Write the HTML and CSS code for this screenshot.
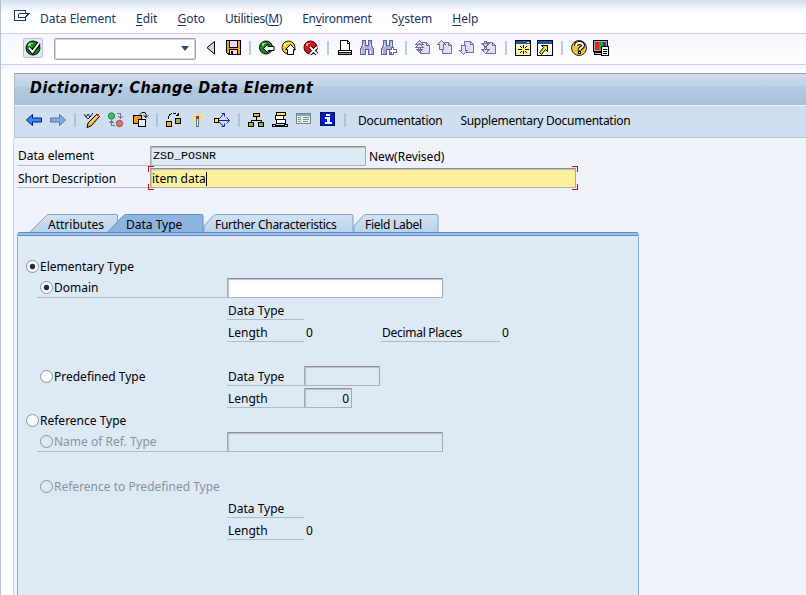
FILE: index.html
```html
<!DOCTYPE html>
<html lang="en">
<head>
<meta charset="UTF-8">
<title>Dictionary: Change Data Element</title>
<link rel="stylesheet" href="styles.css">
</head>
<body>
<div class="window">

<nav class="menubar">
<svg class="icon menu-icon" viewBox="0 0 16 16"><path d="M11.500 3V.5H.5v10h11V8M4.500 3.500h6M4.500 3.500v4h5M10 3.500h5L11 7.500H9"/></svg>
<span>Data Element</span>
<span><u>E</u>dit</span>
<span><u>G</u>oto</span>
<span class="tight">Utilities(<u>M</u>)</span>
<span class="tight">En<u>v</u>ironment</span>
<span>S<u>y</u>stem</span>
<span><u>H</u>elp</span>
</nav>

<div class="toolbar">
<button class="enter"><svg class="icon" viewBox="0 0 16 16"><circle class="green smooth" cx="8" cy="8" r="7"/><path fill="#7fe070" d="M4 3h4v1H6v2H3V4h1z"/><path class="smooth" d="M4 8l3.500 4L14 3" fill="none" stroke="#000" stroke-width="4"/><path class="smooth" d="M4 8l3.500 4L14 3" fill="none" stroke="#fff" stroke-width="2"/></svg></button>
<div class="combo"><i></i></div>
<svg class="icon" viewBox="0 0 16 16"><path class="smooth" fill="#d4d6d4" stroke="#000" d="M11.500 1.500v12.500L4 7.700z"/></svg>
<svg class="icon" viewBox="0 0 16 16"><path fill="#000" d="M1 0h15v15H3l-2-2z"/><path fill="#f0a020" d="M2 1h2v12H2zM13 1h2v13h-2zM4 8h9v1H4z"/><path fill="#e6d8f0" d="M5 1h7v6H5zM5 10h7v4H5z"/><path fill="#000" d="M6 11h2v3H6z"/></svg>
<b class="sep"></b>
<svg class="icon" viewBox="0 0 16 16"><circle class="green smooth" cx="7" cy="7.500" r="6.500"/><path fill="#80e070" d="M3 3h4v1H5v2H3z"/><path class="smooth" fill="#fff" stroke="#000" d="M4.500 8.500l4.500-4.500v2.500h6v4H9V13z"/></svg>
<svg class="icon" viewBox="0 0 16 16"><circle class="yellow smooth" cx="7.500" cy="7.500" r="6.500"/><path fill="#fff8a0" d="M3 3h5v1H5v2H3z"/><path class="smooth" fill="#fff" stroke="#000" d="M9.500 4.500l5 5h-2v5h-6v-5h-2z"/></svg>
<svg class="icon" viewBox="0 0 16 16"><circle class="red smooth" cx="7.500" cy="7.500" r="6.500"/><path fill="#ff9080" d="M3 3h4v1H5v2H3z"/><path class="smooth" d="M7 7l7 7M14 7l-7 7" stroke="#000" stroke-width="3.500"/><path class="smooth" d="M7 7l7 7M14 7l-7 7" stroke="#fff" stroke-width="1.800"/></svg>
<b class="sep"></b>
<svg class="icon" viewBox="0 0 16 16"><path fill="#fff" stroke="#000" d="M3.500 .5h7l2 2v8h-9z"/><path fill="#000" d="M10 1h1v2h2v1h-3zM1 10h14v5H1z"/><path fill="#fff" d="M2 11h12v1H2z"/><path fill="#99a" d="M2 13h12v1H2z"/></svg>
<svg class="icon" viewBox="0 0 16 16"><path fill="#aab0dc" stroke="#5d6190" d="M3.500 .5h3v5h3v-5h3v4l2 5v5h-5v-5h-3v5h-5v-5l2-5z"/><path fill="#e0e2fa" d="M4 4h1v3H4zM2 10h1v4H2zM11 4h1v3h-1zM11 10h1v4h-1z"/></svg>
<svg class="icon" viewBox="0 0 16 16"><path fill="#aab0dc" stroke="#5d6190" d="M2.500 .5h3v5h3v-5h3v4l1 5v5h-4v-5h-3v5h-5v-5l2-5z"/><path fill="#e0e2fa" d="M3 4h1v3H3zM1 10h1v4H1zM10 3h1v3h-1z"/><path fill="#fff" stroke="#5d6190" d="M10.500 7.500h2v2h3v3h-3v2h-2v-2h-2v-3h2z"/></svg>
<b class="sep"></b>
<svg class="icon page" viewBox="0 0 16 16"><path d="M5.500 2.500h6l3 3v8h-9z"/><path d="M11.500 3v2.500h3"/><path d="M4.500 .5l3.500 3.500H1zM4.500 3.500l3.500 3.500H1zM3.500 7h2v3h-2zM4.500 12.500l3-3h-6z"/></svg>
<svg class="icon page" viewBox="0 0 16 16"><path d="M5.500 2.500h6l3 3v8h-9z"/><path d="M11.500 3v2.500h3"/><path d="M4.500 .5l4 4h-2v5h-4v-5h-2z"/></svg>
<svg class="icon page" viewBox="0 0 16 16"><path d="M5.500 1.500h6l3 3v8h-9z"/><path d="M11.500 2v2.500h3"/><path d="M4.500 14.500l-4-4h2v-5h4v5h2z"/></svg>
<svg class="icon page" viewBox="0 0 16 16"><path d="M5.500 2.500h6l3 3v8h-9z"/><path d="M11.500 3v2.500h3"/><path d="M3.500 1h2v2h-2zM1 3.500h7L4.500 7zM3.500 7h2v2h-2zM1 9.500h7L4.500 13.500z"/></svg>
<b class="sep"></b>
<svg class="icon" viewBox="0 0 16 16"><path fill="#fff5a8" stroke="#000" d="M.5 .5h15v15H.5z"/><path fill="#1d56a8" d="M1 1h14v3H1z"/><path fill="#fff" d="M12 2h2v1h-2z"/><path class="smooth" stroke="#000" d="M8.500 5v9M3 9.500h11M5 6l7 7M12 6l-7 7"/><path fill="#ffef20" d="M7 8h3v3H7z"/></svg>
<svg class="icon" viewBox="0 0 16 16"><path fill="#fff" stroke="#000" d="M.5 .5h15v15H.5z"/><path fill="#1d56a8" d="M1 1h14v3H1z"/><path class="smooth" fill="#ffe020" stroke="#000" d="M4.500 5.500h6v6l-2-2-4 5-2-2 4-5z"/></svg>
<b class="sep"></b>
<svg class="icon" viewBox="0 0 16 16"><circle class="yellow smooth" cx="8" cy="8" r="7.500"/><path class="smooth" d="M5 6c0-4 7-4 7-.5 0 2.500-3.500 2-3.500 5" fill="none" stroke="#000" stroke-width="4"/><path class="smooth" d="M5 6c0-4 7-4 7-.5 0 2.500-3.500 2-3.500 4.500" fill="none" stroke="#fff" stroke-width="2"/><path fill="#fff" stroke="#000" d="M7.500 11.500h2v2h-2z"/></svg>
<svg class="icon" viewBox="0 0 16 16"><path fill="#aaa" stroke="#000" d="M.5 .5h14v11H.5z"/><path fill="#f02020" d="M2 2h4v8H2z"/><path fill="#10b030" d="M6 2h4v8H6z"/><path fill="#3030d0" d="M10 2h3v8h-3z"/><path fill="#ccc" stroke="#000" d="M1.500 12.500h7v2h-7z"/><path fill="#fff" stroke="#000" d="M8.500 6.500h7v9h-7z"/><path stroke="#000" d="M10 9.500h4M10 11.500h4M10 13.500h4"/></svg>
</div>

<div class="work">
<h1>Dictionary: Change Data Element</h1>

<div class="appbar">
<svg class="icon" viewBox="0 0 16 16"><path class="smooth" fill="#2f8cff" stroke="#00146e" d="M.5 8L6.500 2.500V6h9v4h-9v3.500z"/></svg>
<svg class="icon" viewBox="0 0 16 16"><path class="smooth" fill="#7fa8ea" stroke="#5a7398" d="M15.500 8l-6-5.500V6h-9v4h9v3.500z"/></svg>
<b class="sep"></b>
<svg class="icon" viewBox="0 0 16 16"><path class="smooth" d="M0 2l2 3 2-3 2 3 3-4M2 5l2 2 3-3" fill="none" stroke="#222"/><path class="smooth" fill="#f8b030" stroke="#000" d="M13 2l2.500 2.500L7 14l-4 1.500L4 11z"/><path class="smooth" d="M6 12l7-8" stroke="#fff0a0"/><path fill="#d22" d="M13 2h2v2h-2z"/></svg>
<svg class="icon" viewBox="0 0 16 16"><circle class="smooth" cx="3.500" cy="4" r="3.200" fill="#40c060" stroke="#308050"/><circle class="smooth" cx="11.500" cy="11.500" r="3.200" fill="#e07070" stroke="#a05050"/><path d="M9 1.500h3.500V6M10.500 4.500l2 2 2-2M3.500 9v4.500H7M1.500 11l2-2 2 2" fill="none" stroke="#687888"/></svg>
<svg class="icon" viewBox="0 0 16 16"><path fill="#ff9a18" stroke="#000" d="M1.500 3.500h8v8h-8z"/><path fill="#e8f0fa" stroke="#000" d="M6.500 7.500h7v7h-7z"/><path class="smooth" fill="none" stroke="#000" d="M8 2.500l2-2h3l1 2v3M11.500 3.500l2.500 2 2-2"/></svg>
<b class="sep"></b>
<svg class="icon" viewBox="0 0 16 16"><path fill="#ffa820" stroke="#000" d="M.5 9.500h5v5h-5z"/><path fill="#a0b840" stroke="#000" d="M9.500 6.500h5v5h-5z"/><path fill="none" stroke="#000" stroke-dasharray="3 1" d="M2.500 7V4l3-2.500h5l2 3M9.500 3.500h3v-3"/></svg>
<svg class="icon" viewBox="0 0 16 16"><path class="smooth" stroke="#f4ef20" d="M7.500 0v3M2.500 0l3 4M12.500 0l-3 4M1 5.500h4M10 5.500h4M2 10.500l3.500-3M13 10.500l-3.500-3"/><path fill="#e8f6ff" stroke="#557788" d="M6.500 6.500h2v8h-2z"/><path fill="#f01010" d="M6 4h3v3H6z"/></svg>
<svg class="icon" viewBox="0 0 16 16"><path class="smooth" fill="none" stroke="#1020a0" d="M5 8.500h10M12.500 5.500l3 3-3 3M5 7l5-5.500M7.500 1.500h3v3M5 10l5 4.500M7.500 14.500h3v-3"/><path fill="#ffe630" stroke="#000" d="M.5 6.500h4v4h-4z"/></svg>
<b class="sep"></b>
<svg class="icon" viewBox="0 0 16 16"><path fill="none" stroke="#000" d="M8.500 5v3M3.500 11V8.500h10V11"/><path fill="#ffaa20" stroke="#000" d="M5.500 1.500h6v3h-6z"/><path fill="#a0b040" stroke="#000" d="M.5 10.500h5v4h-5zM10.500 10.500h5v4h-5z"/></svg>
<svg class="icon" viewBox="0 0 16 16"><path fill="#ffe640" stroke="#000" d="M4.500 .5h9v3h-9z"/><path fill="#fff" stroke="#000" d="M3.500 3.500h8v4h-8zM4.500 7.500h9v4h-9z"/><path fill="#d0dce8" stroke="#000" d="M.5 12.500h3v1h9v-1h3v2H.5z"/></svg>
<svg class="icon" viewBox="0 0 16 16"><path fill="#e8eee8" stroke="#74848c" d="M.5 1.500h14v10H.5z"/><path fill="#87a5b8" d="M1 2h13v2H1z"/><path stroke="#889" d="M2 5.500h3M2 7.500h3M2 9.500h3M7 5.500h6M7 7.500h6M7 9.500h5"/></svg>
<svg class="icon" viewBox="0 0 16 16"><path fill="#0018d8" stroke="#001050" d="M.5 .5h14v13H.5z"/><path fill="#fff" d="M6 2h4v2H6zM5 5h5v5h2v2H5v-2h2V7H5z"/></svg>
<b class="sep"></b>
<span class="doc">Documentation</span>
<span class="supp">Supplementary Documentation</span>
</div>

<div class="content">
<div class="row">
<label class="line name">Data element</label>
<div class="field mono w216">ZSD_POSNR</div>
<span class="status">New(Revised)</span>
</div>
<div class="row">
<label class="line name">Short Description</label>
<div class="field focus">item data<i class="caret"></i><b class="corner tl"></b><b class="corner tr"></b><b class="corner bl"></b><b class="corner br"></b></div>
</div>

<div class="tabs">
<svg class="tabshape" viewBox="0 0 624 22">
<defs>
<linearGradient id="tab" x1="0" y1="0" x2="0" y2="1"><stop offset="0" stop-color="#d4e2f2"/><stop offset="1" stop-color="#b8d2ec"/></linearGradient>
</defs>
<path fill="url(#tab)" stroke="#7c9fc9" d="M12 19L29.500 1.500Q30 .5 32 .5h67q1.500 0 1.500 1.500v17zM187 12L196.500 1.500q1-1 2-1h136q1.500 0 1.500 1.500v17H187zM337 12L346.500 1.500q1-1 2-1h71q1.500 0 1.500 1.500v17H337z"/>
<path fill="#8db3df" stroke="#5e8fc4" d="M90 19L106.500 1.500q1-1 2-1h76q1.500 0 1.500 1.500v17z"/>
</svg>
<span class="t1">Attributes</span>
<span class="t2">Data Type</span>
<span class="t3 tight">Further Characteristics</span>
<span class="t4 tight">Field Label</span>
</div>

<div class="panel">
<div class="row"><label class="radio"><i class="on"></i>Elementary Type</label></div>
<div class="row"><label class="radio sub line"><i class="on"></i>Domain</label><div class="field white w216"></div></div>
<div class="row indent"><label class="line attr">Data Type</label></div>
<div class="row indent"><label class="line attr">Length</label><span class="value">0</span><label class="line decimals tight">Decimal Places</label><span class="value">0</span></div>
<div class="row"></div>
<div class="row"><label class="radio sub"><i></i>Predefined Type</label><label class="line attr">Data Type</label><div class="field w76"></div></div>
<div class="row indent"><label class="line attr">Length</label><div class="field number">0</div></div>
<div class="row"><label class="radio"><i></i>Reference Type</label></div>
<div class="row"><label class="radio sub line off"><i></i>Name of Ref. Type</label><div class="field w216"></div></div>
<div class="row"></div>
<div class="row"><label class="radio sub off"><i></i>Reference to Predefined Type</label></div>
<div class="row indent"><label class="line attr">Data Type</label></div>
<div class="row indent"><label class="line attr">Length</label><span class="value">0</span></div>
</div>
</div>
</div>
</div>
</body>
</html>
```
FILE: styles.css
```css
* {
box-sizing: border-box;
}

body {
margin: 0;
height: 595px;
overflow: hidden;
background: #fff;
color: #000;
font: 12px/20px "Noto Sans", "Open Sans", sans-serif;
}

.window {
height: 595px;
border-left: 1px solid #b4c1d1;
}

.icon {
width: 16px;
height: 16px;
flex: none;
overflow: visible;
fill: none;
shape-rendering: crispEdges;
}

.smooth {
shape-rendering: auto;
}

.tight {
letter-spacing: -.28px;
}

.green { fill: #118a18; stroke: #000; }
.yellow { fill: #f8c818; stroke: #222; }
.red { fill: #d81818; stroke: #300; }

.page path {
fill: #dcdff6;
stroke: #71759c;
}

/* menu */
.menubar {
display: flex;
align-items: center;
height: 34px;
padding: 4px 0 0 13px;
gap: 20px;
border-bottom: 1px solid #c9ced9;
background: linear-gradient(#d2dff0, #f7f9fd 10px, #fff 16px);
color: #1c335f;
}

.menubar span {
white-space: nowrap;
}

.menubar u {
text-underline-offset: 2px;
}

.menu-icon {
margin: -2px -10px 0 0;
stroke: #24395f;
}

/* standard toolbar */
.toolbar {
display: flex;
align-items: center;
height: 31px;
padding: 0 0 3px 22px;
gap: 6px;
border-bottom: 1px solid #ccd2de;
background: linear-gradient(#f4f5fd, #fff);
}

.sep {
flex: none;
width: 6px;
height: 14px;
background: linear-gradient(#b4cdea, #b4cdea) center / 2px 100% no-repeat;
}

.enter {
display: flex;
align-items: center;
justify-content: center;
width: 20px;
height: 20px;
margin-right: 5px;
padding: 0;
border: 1px solid #b7c0d4;
border-radius: 2px;
background: #e4e9f5;
}

.combo {
display: flex;
align-items: center;
justify-content: flex-end;
width: 142px;
height: 22px;
margin: 2px 1px 0 0;
padding-right: 6px;
border: 1px solid #a3a3ab;
border-radius: 2px;
box-shadow: inset 0 0 0 1px #d6d6de;
background: #fff;
}

.combo i {
border: 4px solid transparent;
border-top: 5px solid #2d4776;
border-bottom: 0;
}

/* work area */
.work {
height: 530px;
padding: 8px 0 0 12px;
background: linear-gradient(#f3f4fe, #fff 9px);
}

h1 {
height: 32px;
margin: 0 0 0 1px;
padding-left: 15px;
border-top: 1px solid #8da3bb;
border-left: 1px solid #a8b8ca;
background: linear-gradient(#cfdded, #bfd2e6 12px, #b2c9df 14px, #a9c2dc);
font: italic bold 16px/28px "DejaVu Sans Condensed", "DejaVu Sans", sans-serif;
font-stretch: condensed;
letter-spacing: .43px;
}

.appbar {
display: flex;
align-items: center;
height: 33px;
margin-left: 1px;
padding: 0 0 3px 11px;
gap: 8px;
border-top: 1px solid #eef3f8;
border-bottom: 1px solid #b3c1d0;
border-left: 1px solid #b4c2d2;
background: #cfdfef;
}

.appbar .sep {
width: 2px;
background: #aac3e0;
}

.appbar span {
padding-top: 2px;
letter-spacing: -.26px;
}

.appbar .doc {
margin-left: 4px;
}

.appbar .supp {
margin-left: 10px;
}

.content {
height: 460px;
padding: 6px 0 0 3px;
border-left: 1px solid #d0d5df;
background: #eff2f8;
}

.row {
display: flex;
align-items: flex-end;
height: 22px;
}

.line {
border-bottom: 1px solid #b5bac0;
}

.name {
width: 133px;
height: 21px;
padding: 1px 0 0 1px;
}

.row:nth-child(2) .name {
padding-top: 2px;
}

.field {
position: relative;
height: 20px;
padding-left: 3px;
border: 1px solid #a5a8a8;
border-top: 1px solid #8e9090;
border-bottom-color: #b0b2b2;
border-radius: 1px;
box-shadow: inset 1px 1px 1px #b9bfc8;
background: #dde9f5;
line-height: 19px;
}

.white {
background: #fff;
}

.w216 { width: 216px; }
.w76 { width: 76px; }

.number {
width: 48px;
padding-right: 2px;
text-align: right;
}

.mono {
padding-left: 2px;
font-family: "Liberation Mono", monospace;
font-size: 11.67px;
}

.status {
padding-left: 3px;
margin-bottom: -1px;
}

.focus {
width: 426px;
padding-left: 1px;
background: #fff09c;
}

.caret {
display: inline-block;
width: 1px;
height: 14px;
background: #000;
vertical-align: -3px;
}

.corner {
position: absolute;
width: 6px;
height: 6px;
border: 0 solid #d80c18;
}

.tl { top: -3px; left: -3px; border-width: 1px 0 0 1px; }
.tr { top: -3px; right: -3px; border-width: 1px 1px 0 0; }
.bl { bottom: -3px; left: -3px; border-width: 0 0 1px 1px; }
.br { bottom: -3px; right: -3px; border-width: 0 1px 1px 0; }

/* tab strip */
.tabs {
position: relative;
display: flex;
height: 18px;
margin-top: 26px;
line-height: 21px;
}

.tabshape {
position: absolute;
top: 0;
left: 0;
width: 624px;
height: 22px;
}

.tabs span {
position: relative;
}

.t1 { margin-left: 31px; width: 78px; }
.t2 { width: 89px; }
.t3 { width: 150px; }

.panel {
position: relative;
width: 622px;
height: 370px;
padding-top: 21px;
border: 1px solid #8aabd3;
border-top: 1px solid #5d88bb;
border-radius: 3px 3px 0 0;
background: linear-gradient(#9dc0e6 2px, #5e8cbd 2px, #5e8cbd 3px, #dde9f5 3px);
}

.radio {
display: flex;
align-items: center;
height: 22px;
padding: 3px 0 0 8px;
}

.radio i {
width: 13px;
height: 13px;
margin: 0 1px 1px 0;
border: 1px solid #8d939b;
border-radius: 50%;
background: #fafafa;
}

.radio .on {
background: radial-gradient(circle, #262d4c 2.3px, #fafafa 3.2px);
}

.sub {
width: 190px;
margin-left: 19px;
padding-left: 3px;
}

.off {
color: #8c939a;
}

.off i {
background: #dde9f5;
}

.indent {
padding-left: 209px;
}

.attr {
width: 77px;
height: 21px;
padding: 2px 0 0 1px;
}

.value {
width: 77px;
padding-left: 2px;
margin-bottom: -1px;
}

.decimals {
width: 119px;
height: 21px;
padding: 2px 0 0 1px;
}
```
